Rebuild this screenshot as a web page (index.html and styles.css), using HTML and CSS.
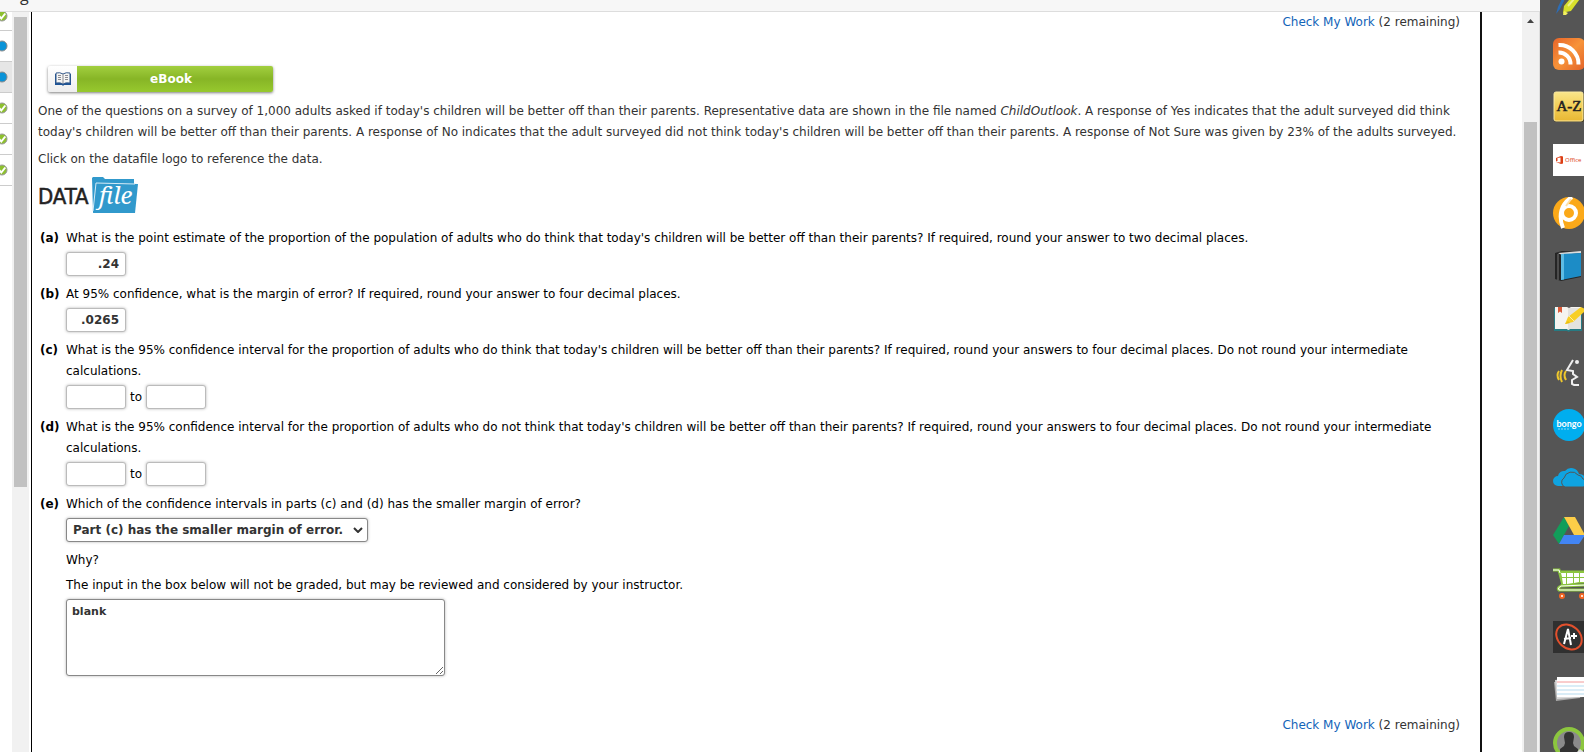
FILE: index.html
```html
<!DOCTYPE html>
<html lang="en">
<head>
    <meta charset="UTF-8">
    <meta name="viewport" content="width=device-width, initial-scale=1.0">
    <title>Assignment</title>
    <link rel="stylesheet" href="styles.css">
</head>
<body>
    <header class="topbar">g</header>
    <div class="layout">
        <nav class="question-nav" aria-label="Questions">
            <a href="#" class="nav-item"><svg viewBox="0 0 12 12"><circle cx="6" cy="6" r="5" fill="#8dc02f" stroke="#999"/><path d="M3 6l2.300 2.500L9.300 3.500" fill="none" stroke="#fff" stroke-width="2"/></svg></a>
            <a href="#" class="nav-item"><svg viewBox="0 0 12 12"><circle cx="6" cy="6" r="5" fill="#0a93d8" stroke="#8a8a8a"/></svg></a>
            <a href="#" class="nav-item current"><svg viewBox="0 0 12 12"><circle cx="6" cy="6" r="5" fill="#0a93d8" stroke="#8a8a8a"/></svg></a>
            <a href="#" class="nav-item"><svg viewBox="0 0 12 12"><circle cx="6" cy="6" r="5" fill="#8dc02f" stroke="#999"/><path d="M3 6l2.300 2.500L9.300 3.500" fill="none" stroke="#fff" stroke-width="2"/></svg></a>
            <a href="#" class="nav-item"><svg viewBox="0 0 12 12"><circle cx="6" cy="6" r="5" fill="#8dc02f" stroke="#999"/><path d="M3 6l2.300 2.500L9.300 3.500" fill="none" stroke="#fff" stroke-width="2"/></svg></a>
            <a href="#" class="nav-item"><svg viewBox="0 0 12 12"><circle cx="6" cy="6" r="5" fill="#8dc02f" stroke="#999"/><path d="M3 6l2.300 2.500L9.300 3.500" fill="none" stroke="#fff" stroke-width="2"/></svg></a>
        </nav>
        <div class="scrollbar nav-scroll"><div class="thumb"></div></div>

        <main class="question">
            <p class="check"><a href="#">Check My Work</a> (2 remaining)</p>

            <button class="ebook" type="button">
                <span class="ebook-icon">
                    <svg width="16" height="14" viewBox="0 0 16 14"><path d="M0 2h1v9h6l1 1 1-1h6V2h1v11H9l-1 1-1-1H0z" fill="#1d5496"/><path d="M1 1q4-1 7 1 3-2 7-1v10q-4-1-7 1-3-2-7-1z" fill="#f5f5f3" stroke="#35598a"/><path d="M8 2v9M3 3.500h3M3 5.500h3M3 7.500h3M10 3.500h3M10 5.500h3M10 7.500h3" stroke="#8b8b93" fill="none"/></svg>
                </span>
                <span class="ebook-label">eBook</span>
            </button>

            <p class="intro">One of the questions on a survey of 1,000 adults asked if today's children will be better off than their parents. Representative data are shown in the file named <em>ChildOutlook</em>. A response of Yes indicates that the adult surveyed did think today's children will be better off than their parents. A response of No indicates that the adult surveyed did not think today's children will be better off than their parents. A response of Not Sure was given by 23% of the adults surveyed.</p>
            <p class="intro">Click on the datafile logo to reference the data.</p>

            <a href="#" class="datafile">
                <svg width="100" height="36" viewBox="0 0 100 36">
                    <text x="0" y="27" class="data">DATA</text>
                    <path d="M54 1l1-1h10l2 2h29v6h-36l-4 27h-1z" fill="#3199cc"/>
                    <path d="M58 6l42 1-3 29H55z" fill="#3199cc"/>
                    <path d="M55 34l3-28 39 1" fill="none" stroke="#d5ebf6"/>
                    <text x="61" y="27" class="file">file</text>
                </svg>
            </a>

            <section class="part">
                <b>(a)</b>
                <div>
                    <label for="a1">What is the point estimate of the proportion of the population of adults who do think that today's children will be better off than their parents? If required, round your answer to two decimal places.</label>
                    <div class="answer"><input id="a1" type="text" value=".24"></div>
                </div>
            </section>
            <section class="part">
                <b>(b)</b>
                <div>
                    <label for="b1">At 95% confidence, what is the margin of error? If required, round your answer to four decimal places.</label>
                    <div class="answer"><input id="b1" type="text" value=".0265"></div>
                </div>
            </section>
            <section class="part">
                <b>(c)</b>
                <div>
                    <label for="c1">What is the 95% confidence interval for the proportion of adults who do think that today's children will be better off than their parents? If required, round your answers to four decimal places. Do not round your intermediate calculations.</label>
                    <div class="answer"><input id="c1" type="text"><label for="c2">to</label><input id="c2" type="text"></div>
                </div>
            </section>
            <section class="part">
                <b>(d)</b>
                <div>
                    <label for="d1">What is the 95% confidence interval for the proportion of adults who do not think that today's children will be better off than their parents? If required, round your answers to four decimal places. Do not round your intermediate calculations.</label>
                    <div class="answer"><input id="d1" type="text"><label for="d2">to</label><input id="d2" type="text"></div>
                </div>
            </section>
            <section class="part">
                <b>(e)</b>
                <div>
                    <label for="e1">Which of the confidence intervals in parts (c) and (d) has the smaller margin of error?</label>
                    <div class="answer">
                        <span class="select-wrap">
                            <select id="e1"><option>Part (c) has the smaller margin of error.</option></select>
                            <svg class="caret" width="10" height="6" viewBox="0 0 10 6"><path d="M1 1l4 4 4-4" fill="none" stroke="#333" stroke-width="2"/></svg>
                        </span>
                    </div>
                    <p class="why">Why?</p>
                    <label for="e2">The input in the box below will not be graded, but may be reviewed and considered by your instructor.</label>
                    <div class="answer"><textarea id="e2">blank</textarea></div>
                </div>
            </section>

            <p class="check check-bottom"><a href="#">Check My Work</a> (2 remaining)</p>
        </main>

        <div class="scrollbar page-scroll">
            <svg class="arrow" width="7" height="4" viewBox="0 0 7 4"><path d="M0 4L3.500 0 7 4z" fill="#444"/></svg>
            <div class="thumb"></div>
        </div>

        <aside class="dock">
            <!-- highlighter -->
            <a href="#"><svg viewBox="0 0 32 32"><path d="M3 29l2-7 10-21 3 1L7 24z" fill="#2d6db5"/><path d="M10 28l1-7 15-18 6 4-14 19-5 1-1 3z" fill="#d7df2b"/><path d="M10 30l1-4 4 2-2 2z" fill="#f2f060"/><path d="M15 21l12-14" stroke="#eef08a" stroke-width="2"/></svg></a>
            <!-- rss -->
            <a href="#"><svg viewBox="0 0 32 32"><defs><linearGradient id="rss" x2="1" y2="1"><stop stop-color="#e8642a"/><stop offset=".5" stop-color="#f79339"/><stop offset="1" stop-color="#e2622a"/></linearGradient></defs><rect width="32" height="32" rx="6" fill="url(#rss)"/><circle cx="8.500" cy="23.500" r="3" fill="#fff"/><path d="M5.500 14.500a11.500 11.500 0 0 1 12 12M5.500 7a19 19 0 0 1 20 19.500" fill="none" stroke="#fff" stroke-width="4"/></svg></a>
            <!-- glossary -->
            <a href="#"><svg viewBox="0 0 32 32"><defs><linearGradient id="az" x2="0" y2="1"><stop stop-color="#f9e58a"/><stop offset=".5" stop-color="#f3cf57"/><stop offset="1" stop-color="#e8b733"/></linearGradient></defs><rect x="1" y="2" width="30" height="29" rx="2" fill="#493f20"/><rect x="1" y="1" width="29" height="29" rx="2" fill="url(#az)" stroke="#fbe9a0"/><text x="16" y="20" class="az-text">A-Z</text></svg></a>
            <!-- office -->
            <a href="#"><svg viewBox="0 0 32 32"><path d="M0 0h32v32H0z" fill="#fff"/><path d="M3 14l5-2 2 .5v7L8 20l-5-2 4.500.500v-5L4.500 14v3L3 17.500z" fill="#dc3e15"/><text x="12" y="18" class="office-text">Office</text></svg></a>
            <!-- orange swirl -->
            <a href="#"><svg viewBox="0 0 32 32"><circle cx="16" cy="16" r="16" fill="#fba919"/><path d="M10 31C5 18 8 7 19 0" fill="none" stroke="#fff" stroke-width="4"/><circle cx="16" cy="16" r="7" fill="none" stroke="#fff" stroke-width="4"/><path d="M13 9l5-7" stroke="#fde0a8" stroke-width="2"/></svg></a>
            <!-- book -->
            <a href="#"><svg viewBox="0 0 32 32"><path d="M2 3l7-2 19 1v25L8 31l-6-2z" fill="#252525"/><path d="M5 3l23-2v2L9 5z" fill="#ddd"/><path d="M8 4l20-1v23L8 30z" fill="#1c8cc6"/><path d="M8 4l3 0v25.500L8 30z" fill="#5ebce4"/><path d="M5 4v26" stroke="#777"/></svg></a>
            <!-- notebook -->
            <a href="#"><svg viewBox="0 0 32 32"><path d="M1 5h28v23H17l-1 1-2-1H1z" fill="#277b83"/><path d="M2 4h12l2 1 2-1h10v22H17l-2 1-1-1H2z" fill="#f5f4f0"/><path d="M15 5h13v21H17l-2 1z" fill="#e4e3df"/><path d="M5 4h4v6L7 8.500 5 10z" fill="#db5a38"/><path d="M12 21l3-7L28 4l4 2-1 3-11 10z" fill="#f8cf25"/><path d="M12 21l3-3 2 2z" fill="#eabd10"/><path d="M16 13l5 5" stroke="#fff0a0"/></svg></a>
            <!-- speech -->
            <a href="#"><svg viewBox="0 0 32 32"><path d="M20 4l-6 10 6 1v3l4 3-5 3v4l2 1h5" fill="none" stroke="#eee" stroke-width="2"/><path d="M6 15q-3 4 0 9M9 14q-3 6 0 12M13 15q-3 4 0 9" fill="none" stroke="#efc82c" stroke-width="2"/><circle cx="24" cy="6" r="2" fill="#eee"/></svg></a>
            <!-- bongo -->
            <a href="#"><svg viewBox="0 0 32 32"><circle cx="16" cy="16" r="16" fill="#00aeef"/><text x="16" y="18" class="bongo-text">bongo</text><path d="M5 20h12" stroke="#8cdcf8" stroke-dasharray="2 1"/></svg></a>
            <!-- onedrive -->
            <a href="#"><svg viewBox="0 0 32 32"><path d="M5 24a5 5 0 0 1 0-10 6 6 0 0 1 7-5 8 8 0 0 1 14 3 7 7 0 0 1 5 12z" fill="#0fa3e0"/><path d="M12 25a5 5 0 0 1-1-9 8 8 0 0 1 14-3 6 6 0 0 1 5 4 4 4 0 0 1 0 8z" fill="#0fa3e0" stroke="#555" stroke-width="1"/></svg></a>
            <!-- drive -->
            <a href="#"><svg viewBox="0 0 32 32"><path d="M11 2L0 20l6 9 10-18z" fill="#129d5a"/><path d="M11 2h11l10 18H21z" fill="#fccd48"/><path d="M11 20h21l-6 9H6z" fill="#4285f4"/></svg></a>
            <!-- cart -->
            <a href="#"><svg viewBox="0 0 32 32"><path d="M0 2h6l4 15M6 4h26M32 17l-24 1q-4 2-2 4h26" fill="none" stroke="#8cc63f" stroke-width="3"/><path d="M7 4h25v11l-22 2z" fill="#8cc63f"/><path d="M8 5h5v4H9zm6 0h6v4h-6zm7 0h5v4h-5zm6 0h5v4h-5zM9 10h4v6h-3zm5 0h6v5l-6 1zm7 0h5v4l-5 1zm6 0h5v4h-5z" fill="#fff"/><path d="M0 2h6l1 3M32 17l-24 1q-4 2-2 4h26" fill="none" stroke="#fff"/><g fill="#fff" stroke="#f26522" stroke-width="2"><circle cx="9" cy="28" r="2"/><circle cx="29" cy="28" r="2"/></g></svg></a>
            <!-- grade -->
            <a href="#"><svg viewBox="0 0 32 32"><path d="M0 0h32v32H0z" fill="#303030"/><g transform="rotate(42 16 16)"><ellipse cx="16" cy="16" rx="14" ry="11" fill="none" stroke="#e2502d" stroke-width="2"/></g><path d="M11 23l4-15 3 16M11 18l7-1M18 15h6M21 12v6" fill="none" stroke="#fff" stroke-width="2"/></svg></a>
            <!-- cards -->
            <a href="#"><svg viewBox="0 0 32 32"><path d="M1 8l2 19 24-3V6z" fill="#a9a9a9"/><path d="M2 6l2 19 26-2V3z" fill="#d9d9d9"/><path d="M4 3h27v20H4z" fill="#fff"/><path d="M4 8h27" stroke="#f29a9a"/><path d="M4 12h27M4 16h27M4 20h27" stroke="#b5dbef"/></svg></a>
            <!-- tutor -->
            <a href="#"><svg viewBox="0 0 32 32"><circle cx="16" cy="16" r="14" fill="#8a8a8a" stroke="#8cc63f" stroke-width="4"/><path d="M11 10q0-5 5-5t5 5l-1 6 1 3 4 3v5H7v-5l4-3 1-3z" fill="#333"/><path d="M23 26l4-4 5 4v6h-7z" fill="#ddd"/></svg></a>
        </aside>
    </div>
</body>
</html>
```

FILE: styles.css
```css
* {
    box-sizing: border-box;
}
body {
    margin: 0;
    height: 100vh;
    overflow: hidden;
    display: flex;
    flex-direction: column;
    font-family: "DejaVu Sans", Verdana, sans-serif;
    font-size: 12px;
    line-height: 21px;
    color: #000;
    background-color: #fff;
}
p {
    margin: 0;
}
.topbar {
    display: flex;
    align-items: flex-end;
    flex: none;
    height: 12px;
    padding: 0 20px 5px;
    overflow: hidden;
    background-color: #f7f7f7;
    border-bottom: 1px solid #ddd;
    font-family: "Open Sans", sans-serif;
    font-size: 16px;
    color: #333;
}
.layout {
    flex: 1;
    min-height: 0;
    display: flex;
}

/* question list on the left */
.question-nav {
    width: 12px;
    overflow: hidden;
    display: flex;
    flex-direction: column;
    flex: none;
}
.nav-item {
    display: flex;
    align-items: center;
    justify-content: flex-end;
    flex: none;
    height: 31px;
    padding-right: 4px;
    border-bottom: 1px solid #ccc;
}
.nav-item:first-child {
    height: 19px;
    padding-bottom: 11px;
}
.nav-item.current {
    background-color: #e6e6e6;
}
.nav-item svg {
    width: 12px;
    height: 12px;
    flex: none;
}

.scrollbar {
    flex: none;
    width: 17px;
    padding: 0 2px;
    background-color: #f1f1f1;
    display: flex;
    flex-direction: column;
    align-items: center;
}
.thumb {
    width: 100%;
    background-color: #c1c1c1;
}
.nav-scroll {
    padding-top: 5px;
}
.nav-scroll .thumb {
    height: 64%;
}
.page-scroll {
    width: 18px;
    border-right: 1px solid #ddd;
}
.page-scroll .arrow {
    flex: none;
    margin: 7px 0 99px;
}
.page-scroll .thumb {
    flex: 1;
}

.question {
    flex: 1;
    overflow: hidden;
    margin: 0 40px 0 2px;
    padding: 0 10px 0 6px;
    border-left: 1px solid #000;
    border-right: 2px solid #111;
}
.check {
    padding-right: 10px;
    text-align: right;
    color: #333;
}
.check a {
    color: #1264b8;
    text-decoration: none;
}
.check-bottom {
    margin-top: 31px;
}

.ebook {
    display: flex;
    width: 225px;
    height: 26px;
    margin: 33px 0 9px 10px;
    padding: 0;
    border: 0;
    border-radius: 2px;
    overflow: hidden;
    box-shadow: 0 1px 3px rgba(0, 0, 0, 0.5);
    font: bold 12px "DejaVu Sans", Verdana, sans-serif;
    color: #fff;
    cursor: pointer;
}
.ebook-icon {
    display: flex;
    align-items: center;
    justify-content: center;
    width: 29px;
    height: 100%;
    background: linear-gradient(#fff, #eee);
}
.ebook-label {
    flex: 1;
    height: 100%;
    padding-right: 8px;
    line-height: 27px;
    background: linear-gradient(#a2cf3f, #87b526 50%, #97c92e);
}

.intro {
    margin-bottom: 6px;
    color: #333;
}

.datafile {
    display: block;
    width: max-content;
    margin: 7px 0 15px;
}
.datafile svg {
    display: block;
}
.data {
    font: 22px "Liberation Sans Narrow", "DejaVu Sans Condensed", sans-serif;
    fill: #222;
    stroke: #222;
    stroke-width: 0.5px;
}
.file {
    font: italic 24px "Noto Serif", "Liberation Serif", serif;
    fill: #fff;
}

.part {
    display: grid;
    grid-template-columns: 26px 1fr;
    padding-left: 2px;
}
.answer {
    display: flex;
    align-items: center;
    gap: 4px;
    padding: 3px 0 8px;
}
input, select, textarea {
    font: bold 12px "DejaVu Sans", Verdana, sans-serif;
    color: #333;
    background-color: #fff;
    border: 1px solid #bbb;
    border-radius: 3px;
    box-shadow: 0 0 3px rgba(0, 0, 0, 0.3);
}
input {
    width: 60px;
    height: 24px;
    padding: 0 6px;
    text-align: right;
}
.select-wrap {
    position: relative;
}
select {
    display: block;
    width: 302px;
    height: 24px;
    padding: 0 6px;
    border-color: #888;
    appearance: none;
}
.caret {
    position: absolute;
    right: 5px;
    top: 9px;
}
.why {
    margin-bottom: 4px;
}
textarea {
    display: block;
    width: 379px;
    height: 77px;
    padding: 5px;
    border-color: #888;
    font-size: 11px;
}

/* app dock on the right */
.dock {
    flex: none;
    width: 44px;
    padding-left: 13px;
    overflow: hidden;
    margin-top: -12px;
    background-color: #555;
}
.dock a {
    display: block;
    width: 32px;
    height: 32px;
    margin-bottom: 21px;
}
.dock a:first-child {
    margin-top: -15px;
}
.dock svg {
    display: block;
}
.az-text {
    font: 15px "Liberation Serif", serif;
    text-anchor: middle;
    fill: #222;
    stroke: #222;
    stroke-width: 0.5px;
}
.office-text {
    font: 6px "Open Sans", sans-serif;
    fill: #dc3e15;
}
.bongo-text {
    font: bold 9px Lato, sans-serif;
    text-anchor: middle;
    fill: #fff;
}
```
